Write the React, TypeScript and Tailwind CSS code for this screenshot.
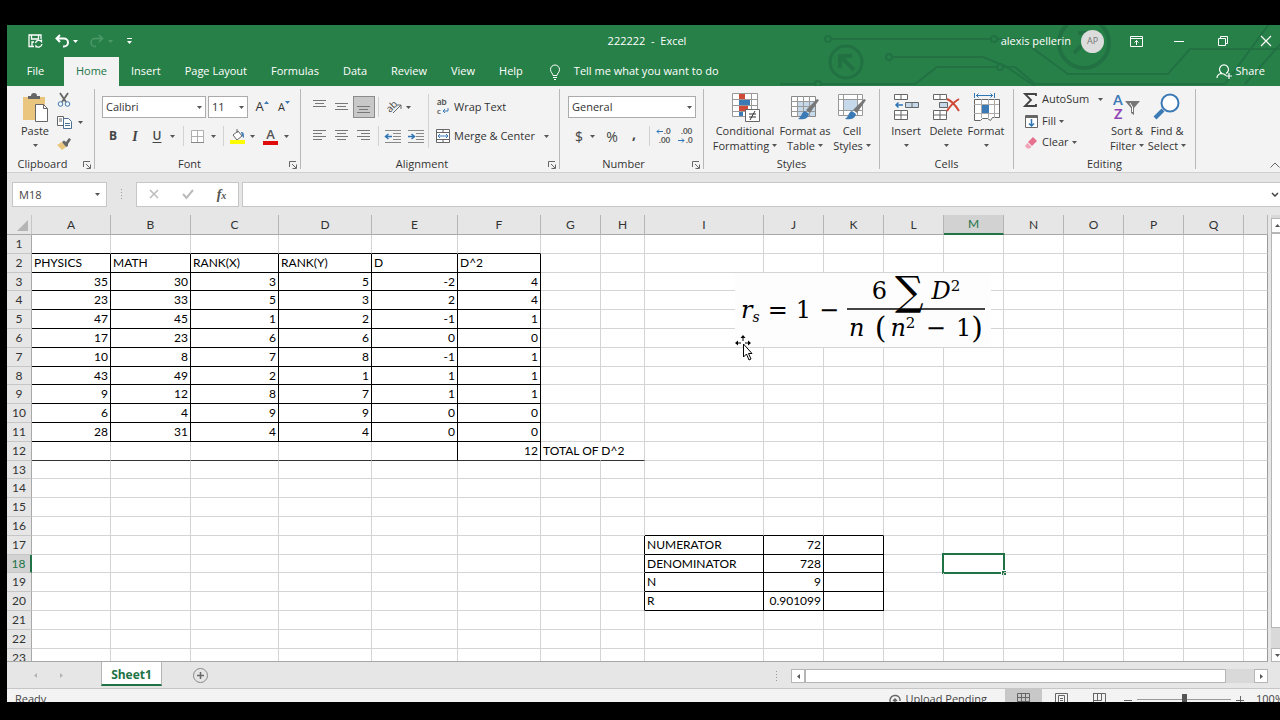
import type { ReactNode } from "react";

const UI_FONT = "font-['Open_Sans','Noto_Sans',sans-serif]";

const columns = [
  { id: "A", width: "w-[79px]" },
  { id: "B", width: "w-[80px]" },
  { id: "C", width: "w-[88px]" },
  { id: "D", width: "w-[93px]" },
  { id: "E", width: "w-[86px]" },
  { id: "F", width: "w-[83px]" },
  { id: "G", width: "w-[60px]" },
  { id: "H", width: "w-[44px]" },
  { id: "I", width: "w-[119px]" },
  { id: "J", width: "w-[60px]" },
  { id: "K", width: "w-[60px]" },
  { id: "L", width: "w-[60px]" },
  { id: "M", width: "w-[60px]" },
  { id: "N", width: "w-[60px]" },
  { id: "O", width: "w-[60px]" },
  { id: "P", width: "w-[60px]" },
  { id: "Q", width: "w-[60px]" },
  { id: "", width: "" },
];

const cells: Record<number, Record<string, string | number>> = {
  2: { A: "PHYSICS", B: "MATH", C: "RANK(X)", D: "RANK(Y)", E: "D", F: "D^2" },
  3: { A: 35, B: 30, C: 3, D: 5, E: -2, F: 4 },
  4: { A: 23, B: 33, C: 5, D: 3, E: 2, F: 4 },
  5: { A: 47, B: 45, C: 1, D: 2, E: -1, F: 1 },
  6: { A: 17, B: 23, C: 6, D: 6, E: 0, F: 0 },
  7: { A: 10, B: 8, C: 7, D: 8, E: -1, F: 1 },
  8: { A: 43, B: 49, C: 2, D: 1, E: 1, F: 1 },
  9: { A: 9, B: 12, C: 8, D: 7, E: 1, F: 1 },
  10: { A: 6, B: 4, C: 9, D: 9, E: 0, F: 0 },
  11: { A: 28, B: 31, C: 4, D: 4, E: 0, F: 0 },
  12: { F: 12, G: "TOTAL OF D^2" },
  17: { I: "NUMERATOR", J: 72 },
  18: { I: "DENOMINATOR", J: 728 },
  19: { I: "N", J: 9 },
  20: { I: "R", J: 0.901099 },
};

const rows = Array.from({ length: 23 }, (_, i) => i + 1);

const rightBorder = (row: number, col: string) => {
  if (row >= 2 && row <= 11 && "ABCDEF".includes(col)) return "border-r-black";
  if (row === 12 && "EF".includes(col)) return "border-r-black";
  if (row === 12 && col === "G") return "border-r-white";
  if (row >= 17 && row <= 20 && "HIJK".includes(col)) return "border-r-black";
  return "border-r-[#d4d4d4]";
};

const bottomBorder = (row: number, col: string) => {
  if (row <= 11 && "ABCDEF".includes(col)) return "border-b-black";
  if (row === 12 && "ABCDEFGH".includes(col)) return "border-b-[#333]";
  if (row >= 16 && row <= 20 && "IJK".includes(col)) return "border-b-black";
  return "border-b-[#d4d4d4]";
};

const Caret = ({ className = "fill-[#555]" }: { className?: string }) => (
  <svg viewBox="0 0 5 3" className={`h-[3px] w-[5px] shrink-0 ${className}`}>
    <path d="M0 0h5L2.5 3z" />
  </svg>
);

const Icon = ({
  w,
  h,
  children,
}: {
  w: number;
  h: number;
  children: ReactNode;
}) => (
  <svg
    width={w}
    height={h}
    viewBox={`0 0 ${w} ${h}`}
    fill="none"
    stroke="#666"
    className="shrink-0 overflow-visible"
  >
    {children}
  </svg>
);

const IconButton = ({
  label,
  className = "w-[22px]",
  children,
}: {
  label: string;
  className?: string;
  children: ReactNode;
}) => (
  <button
    type="button"
    aria-label={label}
    className={`flex h-[22px] shrink-0 items-center justify-center ${className}`}
  >
    {children}
  </button>
);

const Separator = ({ className = "" }: { className?: string }) => (
  <span className={`h-5 w-px shrink-0 bg-[#d2d2d2] ${className}`} />
);

const Group = ({
  title,
  className,
  launcher = false,
  children,
}: {
  title: string;
  className: string;
  launcher?: boolean;
  children: ReactNode;
}) => (
  <section
    aria-label={title}
    className={`flex h-20 shrink-0 flex-col border-r border-[#b8b8b8] ${className}`}
  >
    <div className="flex flex-1">{children}</div>
    <div
      className={`relative h-[14px] text-center leading-[18px] ${launcher ? "pr-4" : ""}`}
    >
      {title}
      {launcher && (
        <button
          type="button"
          aria-label={`${title} settings`}
          className="absolute right-[3px] top-[6px]"
        >
          <Icon w={8} h={8}>
            <path d="M.5 6V.5H7M3 3l4 4M7.500 3.500v4h-4" />
          </Icon>
        </button>
      )}
    </div>
  </section>
);

const BigButton = ({
  lines,
  className,
  caretBelow = false,
  children,
}: {
  lines: string[];
  className: string;
  caretBelow?: boolean;
  children: ReactNode;
}) => (
  <button
    type="button"
    className={`flex shrink-0 flex-col items-center whitespace-nowrap pt-[2px] leading-[15px] ${className}`}
  >
    <span className="flex h-[32px] items-center">{children}</span>
    <span>{lines[0]}</span>
    {caretBelow ? (
      <Caret className="mt-[6px] fill-[#555]" />
    ) : (
      <span className="flex items-center gap-[3px]">
        {lines[1]}
        <Caret />
      </span>
    )}
  </button>
);

const Lines = ({ segments }: { segments: [number, number, number][] }) => (
  <Icon w={14} h={14}>
    {segments.map(([x1, x2, y]) => (
      <path key={y} d={`M${x1} ${y + 0.5}H${x2}`} stroke="#777" />
    ))}
  </Icon>
);

const Brush = () => (
  <>
    <path d="M27 6l2 1-9 13-4-3z" fill="#777" stroke="none" />
    <path d="M15 18l4 3c-1 5-6 6-11 5 4-2 3-7 7-8z" fill="#3c7ab5" stroke="none" />
  </>
);

const TitleBar = () => (
  <div className="relative flex h-8 items-center text-white">
    <div className="flex flex-1 items-center">
      <button type="button" aria-label="Save" className="ml-[21px]">
        <Icon w={15} h={14}>
          <g stroke="#fff" strokeWidth="1.300">
            <path d="M6 12.500H1V1h12v4M3.500 1v4h7V1M4 12V8h2" />
            <path d="M7.500 9a3.500 3.500 0 0 1 6-1.500V5.500M14 10a3.500 3.500 0 0 1-6 2v1.500" />
          </g>
        </Icon>
      </button>
      <button type="button" aria-label="Undo" className="ml-3">
        <Icon w={15} h={14}>
          <path d="M5 1L1.500 4.500 5 8M2 4.500h7a4 4 0 0 1 0 8H8" stroke="#fff" strokeWidth="2" />
        </Icon>
      </button>
      <Caret className="ml-[3px] fill-white" />
      <button type="button" aria-label="Redo" className="ml-[11px]">
        <Icon w={15} h={14}>
          <path d="M10 1l3.500 3.500L10 8M13 4.500H6a4 4 0 0 0 0 8h1" stroke="#4c9a68" strokeWidth="1.500" />
        </Icon>
      </button>
      <Caret className="ml-[4px] fill-[#4c9a68]" />
      <button type="button" aria-label="Customize toolbar" className="ml-[14px]">
        <Icon w={5} h={7}>
          <path d="M0 .5h5" stroke="#fff" />
          <path d="M0 3h5L2.500 6z" fill="#fff" stroke="none" />
        </Icon>
      </button>
    </div>
    <h1 className="whitespace-pre pl-[7px]">222222  -  Excel</h1>
    <div className="flex flex-1 items-center justify-end">
      <span>alexis pellerin</span>
      <span className="ml-[10px] flex size-[23px] items-center justify-center rounded-full bg-[#dcdcdc] text-[9px] text-[#777]">
        AP
      </span>
      <IconButton label="Ribbon display options" className="ml-[11px] w-[42px]">
        <Icon w={13} h={11}>
          <path d="M.5.500h12v10H.5zM.5 2.500h12M6.500 9V4.500M4.500 6.500l2-2 2 2" stroke="#fff" />
        </Icon>
      </IconButton>
      <IconButton label="Minimize" className="w-[44px]">
        <Icon w={10} h={11}>
          <path d="M0 5.500h10" stroke="#fff" />
        </Icon>
      </IconButton>
      <IconButton label="Restore" className="w-[43px]">
        <Icon w={10} h={10}>
          <path d="M.5 2.500h7v7h-7zM2.500 2.500v-2h7v7h-2" stroke="#fff" />
        </Icon>
      </IconButton>
      <IconButton label="Close" className="w-[36px] pl-2">
        <Icon w={10} h={10}>
          <path d="M0 0l10 10M10 0L0 10" stroke="#fff" strokeWidth="1.200" />
        </Icon>
      </IconButton>
    </div>
  </div>
);

const Tabs = () => (
  <nav className="relative flex h-[29px] items-stretch text-white">
    <button type="button" className="w-[57px]">
      File
    </button>
    <button type="button" className="w-[55px] bg-[#f3f3f3] text-[#217346]">
      Home
    </button>
    {["Insert", "Page Layout", "Formulas", "Data", "Review", "View", "Help"].map(
      (tab) => (
        <button key={tab} type="button" className="px-3">
          {tab}
        </button>
      ),
    )}
    <button type="button" className="flex items-center gap-[13px] pl-[14px]">
      <Icon w={12} h={16}>
        <path
          d="M4 11.500c0-2-2.500-3-2.500-6a4.500 4.500 0 0 1 9 0c0 3-2.500 4-2.500 6zM4 13.500h4M5 15.500h2"
          stroke="#fff"
        />
      </Icon>
      Tell me what you want to do
    </button>
    <button type="button" className="ml-auto flex items-center gap-[3px] pr-[15px]">
      <Icon w={16} h={15}>
        <path
          d="M1 14c0-3 2-4 4-4.500M6 9.500a4.500 4.500 0 1 1 4 0M10 12h6M13 9v6M5 9.500c2 0 4 1 5 2"
          stroke="#fff"
          strokeWidth="1.200"
        />
      </Icon>
      Share
    </button>
  </nav>
);

const Header = () => (
  <header className="relative shrink-0 overflow-hidden bg-[#278048]">
    <svg
      viewBox="0 0 500 61"
      className="absolute right-0 top-0 h-[61px] w-[500px]"
      fill="none"
      stroke="#217143"
      strokeWidth="2"
    >
      <circle cx="48" cy="14" r="3" />
      <path d="M51 14h160M218 14h22l48 35h100l22-25h90" />
      <circle cx="214" cy="14" r="3" />
      <circle cx="109" cy="32" r="3" />
      <path d="M112 32h91l22 9 30 20M0 59h35M41 59h94l22-17h60M223 42h12l20 17h190l55-75M465 59l40-45" />
      <circle cx="38" cy="59" r="3" />
      <circle cx="220" cy="42" r="3" />
      <circle cx="66" cy="37" r="16" strokeWidth="3" />
      <path d="M74 45L60 31M60 43V31h12" strokeWidth="4" />
      <circle cx="304" cy="18" r="25" strokeWidth="4" />
      <path d="M294 28l18-18M298 8h14v14" strokeWidth="4" />
    </svg>
    <TitleBar />
    <Tabs />
  </header>
);

const ClipboardGroup = () => (
  <Group title="Clipboard" className="w-[88px]" launcher>
    <BigButton lines={["Paste"]} caretBelow className="ml-3 w-[32px]">
      <Icon w={27} h={29}>
        <path d="M1 4h22v23H1z" fill="#e9c57d" stroke="none" />
        <path d="M6 6V3h3a3 3 0 0 1 6 0h3v3z" fill="#666" stroke="none" />
        <path d="M13.500 11.500h8l4 4v13h-12z" fill="#fff" />
        <path d="M21.500 11.500v4h4" />
      </Icon>
    </BigButton>
    <div className="ml-[2px] flex flex-col">
      <IconButton label="Cut">
        <Icon w={14} h={14}>
          <path d="M3 0l6 9M11 0L5 9" strokeWidth="1.800" />
          <circle cx="3.500" cy="11" r="2.300" stroke="#3c7ab5" />
          <circle cx="10.500" cy="11" r="2.300" stroke="#3c7ab5" />
        </Icon>
      </IconButton>
      <div className="flex items-center gap-[3px]">
        <IconButton label="Copy">
          <Icon w={15} h={13}>
            <path d="M.5.500h6v9h-6zM2 3h3M2 5h3" fill="#fff" />
            <path d="M6.500 2.500h5l3 3v7h-8zM8 7.500h5M8 9.500h5" fill="#fff" stroke="#4a6f94" />
          </Icon>
        </IconButton>
        <Caret />
      </div>
      <IconButton label="Format painter">
        <Icon w={14} h={12}>
          <path d="M0 7l5-3 4 5-4 3z" fill="#e9c57d" stroke="none" />
          <path d="M5 4l2-1.500 2 1.500 3-4 2 1.500L11 6v2L9 9z" fill="#666" stroke="none" />
        </Icon>
      </IconButton>
    </div>
  </Group>
);

const selectStyle =
  "h-[22px] w-full appearance-none border border-[#ababab] bg-white pl-[3px] text-[#333] outline-none";

const Combo = ({
  label,
  value,
  className,
}: {
  label: string;
  value: string;
  className: string;
}) => (
  <label className={`relative block shrink-0 ${className}`}>
    <select aria-label={label} defaultValue={value} className={selectStyle}>
      <option>{value}</option>
    </select>
    <Caret className="pointer-events-none absolute right-[4px] top-[10px] fill-[#555]" />
  </label>
);

const FontGroup = () => (
  <Group title="Font" className="w-[206px]" launcher>
    <div className="flex flex-col gap-[7px] pl-[7px] pt-[7px]">
      <div className="flex items-center">
        <Combo label="Font name" value="Calibri" className="w-[104px]" />
        <Combo label="Font size" value="11" className="ml-[2px] w-[40px]" />
        <IconButton label="Increase font size" className="ml-[3px] w-[22px]">
          <span className="text-[13px]">A</span>
          <Caret className="mb-[10px] rotate-180 fill-[#3c7ab5]" />
        </IconButton>
        <IconButton label="Decrease font size">
          <span className="text-[11px]">A</span>
          <Caret className="mb-[10px] fill-[#3c7ab5]" />
        </IconButton>
      </div>
      <div className="flex items-center text-[12px] text-[#444]">
        <IconButton label="Bold">
          <b>B</b>
        </IconButton>
        <IconButton label="Italic">
          <i className="font-['Liberation_Serif',serif] text-[14px] font-bold">I</i>
        </IconButton>
        <IconButton label="Underline">
          <span className="font-semibold underline underline-offset-2">U</span>
        </IconButton>
        <Caret className="ml-[2px] fill-[#555]" />
        <Separator className="ml-2" />
        <IconButton label="Borders" className="ml-px w-[24px]">
          <Icon w={13} h={13}>
            <path d="M.5.500h12v12H.5zM6.500 0v13M0 6.500h13" fill="#fff" stroke="#b0b0b0" />
            <path d="M0 12.500h13" stroke="#888" />
          </Icon>
        </IconButton>
        <Caret className="ml-[2px] fill-[#555]" />
        <Separator className="ml-[7px]" />
        <IconButton label="Fill color" className="ml-[2px] w-[24px]">
          <Icon w={16} h={15}>
            <path d="M3 6l5-4 4 5-5 4z" fill="#fff" />
            <path d="M7 4V0" />
            <path d="M11 3c3 0 3 2 3 6-2-1-2-3-3-6z" fill="#3c7ab5" stroke="none" />
            <path d="M0 11h15v4H0z" fill="#ff0" stroke="none" />
          </Icon>
        </IconButton>
        <Caret />
        <button
          type="button"
          aria-label="Font color"
          className="ml-2 h-[17px] w-[15px] border-b-4 border-[#e00b0b] text-center text-[13px] font-semibold leading-[13px] text-[#555]"
        >
          A
        </button>
        <Caret className="ml-[6px] fill-[#555]" />
      </div>
    </div>
  </Group>
);

const Indent = ({ right = false }: { right?: boolean }) => (
  <Icon w={16} h={13}>
    <path d="M0 .5h16M8 3.500h8M8 6.500h8M8 9.500h8M0 12.500h16" stroke="#888" />
    {right ? (
      <path d="M0 6.500h6M3.500 4l3 2.500-3 2.500" stroke="#2f74b5" strokeWidth="1.500" />
    ) : (
      <path d="M7 6.500H1M3.500 4L.5 6.500l3 2.500" stroke="#2f74b5" strokeWidth="1.500" />
    )}
  </Icon>
);

const AlignmentGroup = () => (
  <Group title="Alignment" className="w-[259px]" launcher>
    <div className="flex flex-col gap-[7px] pl-2 pt-[7px]">
      <div className="flex items-center">
        <IconButton label="Top align">
          <Lines segments={[[0, 13, 0], [2, 11, 3], [0, 13, 6]]} />
        </IconButton>
        <IconButton label="Middle align">
          <Lines segments={[[0, 13, 3], [2, 11, 6], [0, 13, 9]]} />
        </IconButton>
        <IconButton label="Bottom align" className="w-[22px] border border-[#8c8c8c] bg-[#c8c8c8]">
          <Lines segments={[[0, 13, 6], [2, 11, 9], [0, 13, 12]]} />
        </IconButton>
        <Separator className="ml-[3px]" />
        <IconButton label="Orientation" className="ml-[5px] w-[22px]">
          <Icon w={16} h={14}>
            <text
              x="0"
              y="10"
              fontSize="10"
              fill="#444"
              stroke="none"
              transform="rotate(-45 5 8)"
            >
              ab
            </text>
            <path d="M6 13l8-8M10 5h4v4" />
          </Icon>
        </IconButton>
        <Caret />
      </div>
      <div className="flex items-center">
        <IconButton label="Align left">
          <Lines segments={[[0, 13, 1], [0, 9, 4], [0, 13, 7], [0, 9, 10]]} />
        </IconButton>
        <IconButton label="Center">
          <Lines segments={[[0, 13, 1], [2, 11, 4], [0, 13, 7], [2, 11, 10]]} />
        </IconButton>
        <IconButton label="Align right">
          <Lines segments={[[0, 13, 1], [4, 13, 4], [0, 13, 7], [4, 13, 10]]} />
        </IconButton>
        <Separator className="ml-[3px]" />
        <IconButton label="Decrease indent" className="ml-[2px] w-[23px]">
          <Indent />
        </IconButton>
        <IconButton label="Increase indent" className="w-[23px]">
          <Indent right />
        </IconButton>
      </div>
    </div>
    <span className="ml-px mt-[5px] h-[54px] w-px bg-[#d2d2d2]" />
    <div className="flex flex-col gap-[7px] pl-[7px] pt-[7px]">
      <button type="button" className="flex h-[22px] items-center gap-1">
        <svg
          viewBox="0 0 14 16"
          className="h-4 w-[14px] shrink-0 fill-none font-['Lato',sans-serif]"
        >
          <text x="1" y="6" fontSize="9" fontWeight="700" fill="#555">
            ab
          </text>
          <text x="1" y="15" fontSize="8" fontWeight="700" fill="#555">
            c
          </text>
          <path d="M12 9v3H7M9 10l-2 2 2 2" stroke="#3c7ab5" />
        </svg>
        Wrap Text
      </button>
      <button type="button" className="flex h-[22px] items-center gap-1 whitespace-nowrap">
        <Icon w={14} h={14}>
          <path d="M.5.500h13v13H.5zM0 3.500h14M0 10.500h14M7 0v3.500M7 10.500V14" fill="#fff" />
          <path d="M2 7h10M4 5L2 7l2 2M10 5l2 2-2 2" stroke="#3c7ab5" />
        </Icon>
        Merge &amp; Center
        <Caret className="ml-[5px] fill-[#555]" />
      </button>
    </div>
  </Group>
);

const Decimal = ({ increase = false }: { increase?: boolean }) => (
  <svg
    viewBox="0 0 15 16"
    className="h-4 w-[15px] shrink-0 fill-none font-['Lato',sans-serif]"
  >
    <g fontSize="8" fontWeight="700" fill="#555">
      <text x={increase ? 8 : 3} y="6">
        {increase ? ".0" : ".00"}
      </text>
      <text x={increase ? 3 : 8} y="15">
        {increase ? ".00" : ".0"}
      </text>
    </g>
    {increase ? (
      <path d="M7 3.500H1M3 1.500l-2 2 2 2" stroke="#2f74b5" />
    ) : (
      <path d="M0 12.500h6M4 10.500l2 2-2 2" stroke="#2f74b5" />
    )}
  </svg>
);

const NumberGroup = () => (
  <Group title="Number" className="w-[144px]" launcher>
    <div className="flex flex-col gap-[7px] pl-2 pt-[7px]">
      <Combo label="Number format" value="General" className="w-[128px]" />
      <div className="flex items-center text-[14px] text-[#444]">
        <IconButton label="Accounting format">$</IconButton>
        <Caret />
        <IconButton label="Percent style" className="ml-[6px] w-[22px]">
          %
        </IconButton>
        <IconButton label="Comma style">
          <b className="pb-[6px]">,</b>
        </IconButton>
        <Separator className="ml-1" />
        <IconButton label="Increase decimal" className="ml-[2px] w-[22px]">
          <Decimal increase />
        </IconButton>
        <IconButton label="Decrease decimal">
          <Decimal />
        </IconButton>
      </div>
    </div>
  </Group>
);

const StylesGroup = () => (
  <Group title="Styles" className="w-[176px]">
    <BigButton lines={["Conditional", "Formatting"]} className="ml-[7px] w-[68px]">
      <Icon w={30} h={29}>
        <path d="M2.500.500h25v23h-25zM2 6.500h26M2 12.500h26M2 18.500h26M9.500 0v24M21.500 0v24" fill="#fff" stroke="#999" />
        <path d="M9 1h6v5H9zM9 13h9v5H9z" fill="#cf4b37" stroke="none" />
        <path d="M9 7h11v5H9zM9 19h4v4H9z" fill="#3c7ab5" stroke="none" />
        <path d="M15.500 16.500h14v12h-14z" fill="#fff" />
        <path d="M19 21h7M19 24h7M25 18l-5 9" stroke="#333" />
      </Icon>
    </BigButton>
    <BigButton lines={["Format as", "Table"]} className="w-[52px]">
      <Icon w={30} h={29}>
        <path d="M1.500 3.500h24v20h-24z" fill="#fff" stroke="#888" />
        <path d="M8 9h17v14H8z" fill="#c5d9ea" stroke="none" />
        <path d="M1 8.500h24M1 13.500h24M1 18.500h24M7.500 3v21M13.500 3v21M19.500 3v21" stroke="#999" />
        <Brush />
      </Icon>
    </BigButton>
    <BigButton lines={["Cell", "Styles"]} className="w-[42px]">
      <Icon w={30} h={29}>
        <path d="M1.500 1.500h24v21h-24zM1 6.500h24M1 17.500h24M6.500 1v22M20.500 1v22" fill="#fff" stroke="#999" />
        <path d="M7 7h13v10H7z" fill="#c5d9ea" stroke="none" />
        <Brush />
      </Icon>
    </BigButton>
  </Group>
);

const CellsGroup = () => (
  <Group title="Cells" className="w-[134px]">
    <BigButton lines={["Insert"]} caretBelow className="ml-[6px] w-[40px]">
      <Icon w={26} h={28}>
        <path d="M1.500 1.500h13v5h-13zM8 1v6M1.500 17.500h13v9h-13zM8 17v10M1 22h14" fill="#fff" />
        <path d="M12.500 9.500h13v5h-13zM19 9v6" fill="#c5d9ea" />
        <path d="M10 12H3M5.500 9.500L3 12l2.500 2.500" stroke="#2f74b5" strokeWidth="1.500" />
      </Icon>
    </BigButton>
    <BigButton lines={["Delete"]} caretBelow className="w-[40px]">
      <Icon w={28} h={28}>
        <path d="M1.500 1.500h13v5h-13zM8 1v6M1.500 17.500h13v9h-13zM8 17v10M1 22h14" fill="#fff" />
        <path d="M7.500 9.500h8v5h-8z" fill="#c5d9ea" />
        <path d="M15 6c5 2 9 7 12 12M27 6c-5 3-9 7-12 12" stroke="#cf4b37" strokeWidth="2" />
      </Icon>
    </BigButton>
    <BigButton lines={["Format"]} caretBelow className="w-[40px]">
      <Icon w={27} h={29}>
        <path d="M1.500 0v5M21.500 0v5M3 2.500h17M5.500.500l-2 2 2 2M17.500.500l2 2-2 2" stroke="#2f74b5" />
        <path d="M1.500 6.500h25v18h-7l-2 3-3-2h-5l-2 2h-6z" fill="#fff" />
        <path d="M1 11.500h25M1 20.500h25M8.500 6v19M15.500 6v19M21.500 6v19" stroke="#aaa" />
        <path d="M9 12h7v8H9z" fill="#3c7ab5" stroke="none" />
      </Icon>
    </BigButton>
  </Group>
);

const EditingGroup = () => (
  <Group title="Editing" className="w-[182px]">
    <div className="ml-[10px] flex w-[83px] flex-col">
      <button type="button" className="flex h-[21px] items-center">
        <span className="flex w-[18px]">
          <Icon w={13} h={14}>
            <path d="M12 3V1H1l6 6-6 6h11v-2" stroke="#444" strokeWidth="1.800" />
          </Icon>
        </span>
        AutoSum
        <Caret className="ml-auto mr-1 fill-[#555]" />
      </button>
      <button type="button" className="flex h-[22px] items-center">
        <span className="flex w-[18px] pl-px">
          <Icon w={13} h={13}>
            <path d="M.5.500h12v12H.5z" fill="#fff" />
            <path d="M0 2h13" strokeWidth="2" />
            <path d="M6.500 4v7M4 8.500l2.500 2.500L9 8.500" stroke="#2f74b5" strokeWidth="1.500" />
          </Icon>
        </span>
        Fill
        <Caret className="ml-[3px] fill-[#555]" />
      </button>
      <button type="button" className="flex h-[21px] items-center">
        <span className="flex w-[18px] pl-px">
          <Icon w={13} h={12}>
            <path d="M3 5l5-5 4 4-5 5z" fill="#e8708f" stroke="none" />
            <path d="M2.500 6l4 4-2 1.500H2L0 9z" fill="#f0a3b6" stroke="none" />
          </Icon>
        </span>
        Clear
        <Caret className="ml-[3px] fill-[#555]" />
      </button>
    </div>
    <BigButton lines={["Sort &", "Filter"]} className="w-[40px]">
      <svg
        viewBox="0 0 28 28"
        className="size-7 shrink-0 font-['Lato',sans-serif]"
        fill="none"
      >
        <text x="0" y="12" fontSize="14" fontWeight="700" fill="#3c7ab5">
          A
        </text>
        <text x="1" y="26" fontSize="14" fontWeight="700" fill="#9044b5">
          Z
        </text>
        <path d="M12 8h15l-6 7v7l-3-2v-5z" fill="#777" />
        <path d="M17 10l2.500 4v5" stroke="#fff" />
      </svg>
    </BigButton>
    <BigButton lines={["Find &", "Select"]} className="w-[40px]">
      <Icon w={26} h={28}>
        <path d="M9 17l-8 8" stroke="#3c7ab5" strokeWidth="4" />
        <circle cx="16" cy="10" r="8.500" fill="#fff" stroke="#3c7ab5" strokeWidth="2" />
      </Icon>
    </BigButton>
  </Group>
);

const Ribbon = () => (
  <div className="flex h-[87px] shrink-0 border-b border-[#d0d0d0] bg-[#f3f3f3] pt-[3px] text-[#333]">
    <ClipboardGroup />
    <FontGroup />
    <AlignmentGroup />
    <NumberGroup />
    <StylesGroup />
    <CellsGroup />
    <EditingGroup />
    <button type="button" aria-label="Collapse ribbon" className="mb-1 ml-auto mt-auto">
      <Icon w={10} h={6}>
        <path d="M.5 5.500L5 1l4.500 4.500" />
      </Icon>
    </button>
  </div>
);

const FormulaBar = () => (
  <div className="flex h-[42px] shrink-0 items-center bg-[#e6e6e6] pl-[5px]">
    <label className="relative block w-[95px]">
      <input
        aria-label="Name box"
        defaultValue="M18"
        className="h-[25px] w-full border border-[#c6c6c6] bg-white pl-[6px] text-[#444] outline-none"
      />
      <Caret className="absolute right-[7px] top-[11px] fill-[#555]" />
    </label>
    <Icon w={29} h={12}>
      <path d="M14.500 1v10" stroke="#999" strokeDasharray="1 2" />
    </Icon>
    <div className="flex h-[25px] w-[103px] items-center border border-[#c6c6c6] bg-white">
      <IconButton label="Cancel" className="w-[34px]">
        <Icon w={10} h={10}>
          <path d="M1 1l8 8M9 1L1 9" stroke="#bbb" strokeWidth="1.500" />
        </Icon>
      </IconButton>
      <IconButton label="Enter" className="w-[34px]">
        <Icon w={12} h={10}>
          <path d="M1 5l3.500 4L11 1" stroke="#bbb" strokeWidth="2" />
        </Icon>
      </IconButton>
      <IconButton label="Insert function" className="w-[33px]">
        <i className="font-['Liberation_Serif',serif] text-[14px] font-bold text-[#555]">
          f<span className="text-[10px]">x</span>
        </i>
      </IconButton>
    </div>
    <label className="relative ml-[3px] block flex-1">
      <input
        aria-label="Formula bar"
        className="h-[25px] w-full border border-r-0 border-[#c6c6c6] bg-white px-2 outline-none"
      />
      <svg
        viewBox="0 0 8 5"
        className="absolute right-[1px] top-[10px] h-[5px] w-2 fill-none stroke-[#444]"
        strokeWidth="1.500"
      >
        <path d="M1 1l3 3 3-3" />
      </svg>
    </label>
  </div>
);

const Grid = () => (
  <table className="w-full table-fixed border-separate border-spacing-0 bg-white">
    <colgroup>
      <col className="w-[25px]" />
      {columns.map((col) => (
        <col key={col.id} className={col.width} />
      ))}
    </colgroup>
    <thead>
      <tr className="h-5">
        <th className="border-b border-r border-[#a8a8a8] border-r-[#c6c6c6] bg-[#e6e6e6] p-0">
          <svg viewBox="0 0 12 12" className="ml-auto mr-[3px] size-3 fill-[#b5b5b5]">
            <path d="M12 1v11H1z" />
          </svg>
        </th>
        {columns.map((col) => (
          <th
            key={col.id}
            scope="col"
            className={`p-0 text-[12px] font-normal leading-4 ${
              col.id === "M"
                ? "border-b-2 border-r border-b-[#217346] border-r-[#b5b5b5] bg-[#d2d2d2] text-[#217346]"
                : "border-b border-r border-b-[#a8a8a8] border-r-[#b5b5b5] bg-[#e6e6e6] text-[#333]"
            }`}
          >
            {col.id}
          </th>
        ))}
      </tr>
    </thead>
    <tbody>
      {rows.map((row) => (
        <tr key={row} className={row % 5 === 3 ? "h-[18px]" : "h-[19px]"}>
          <th
            scope="row"
            className={`border-b border-b-[#c6c6c6] p-0 text-[12px] font-normal leading-4 ${
              row === 18
                ? "border-r-2 border-r-[#217346] bg-[#d2d2d2] text-[#217346]"
                : "border-r border-r-[#a8a8a8] bg-[#e6e6e6] text-[#333]"
            }`}
          >
            {row}
          </th>
          {columns.map((col) => {
            const value = cells[row]?.[col.id];
            return (
              <td
                key={col.id}
                className={`relative whitespace-nowrap border-b border-r px-[2px] py-0 leading-4 ${
                  typeof value === "number" ? "text-right" : "text-left"
                } ${col.id ? rightBorder(row, col.id) : "border-r-[#999]"} ${
                  col.id ? bottomBorder(row, col.id) : "border-b-[#d4d4d4]"
                }`}
              >
                {value}
                {row === 18 && col.id === "M" && (
                  <span className="absolute -bottom-[2px] -left-[2px] -right-[2px] -top-[2px] border-2 border-[#217346]">
                    <span className="absolute -bottom-[3px] -right-[3px] size-[5px] border-l border-t border-white bg-[#217346]" />
                  </span>
                )}
              </td>
            );
          })}
        </tr>
      ))}
    </tbody>
  </table>
);

const Squared = ({ children }: { children: ReactNode }) => (
  <span className="flex items-start">
    <i>{children}</i>
    <sup className="top-0 text-[15px] leading-none">2</sup>
  </span>
);

const SpearmanFormula = () => (
  <div className="absolute left-[728px] top-[58px] flex h-[74px] w-[256px] items-center justify-between bg-[#fdfdfd] px-[6px] font-['DejaVu_Serif',serif] text-[24px] leading-none text-black">
    <span>
      <i>r</i>
      <sub className="text-[14px] italic">s</sub>
    </span>
    <span>=</span>
    <span>1</span>
    <span>−</span>
    <span className="flex w-[138px] flex-col">
      <span className="flex h-[36px] items-center justify-center gap-2 border-b-2 border-[#444]">
        <span>6</span>
        <span className="text-[40px]">∑</span>
        <Squared>D</Squared>
      </span>
      <span className="flex h-[36px] items-center justify-between px-[2px]">
        <i>n</i>
        <span className="flex items-center gap-1">
          <span className="text-[30px]">(</span>
          <Squared>n</Squared>
        </span>
        <span>−</span>
        <span className="flex items-center">
          <span>1</span>
          <span className="text-[30px]">)</span>
        </span>
      </span>
    </span>
  </div>
);

const MoveCursor = () => (
  <svg
    viewBox="0 0 18 26"
    className="absolute left-[728px] top-[120px] h-[26px] w-[18px]"
    fill="#000"
  >
    <path d="M8 0l2.500 3H8.500v3h-1V3h-2zM0 8l3-2.500v2h3v1H3v2zM16 8l-3-2.500v2h-3v1h3v2z" />
    <path d="M8.500 9v13l3-3 2.500 6 2-1-2.500-5.500H17z" fill="#fff" stroke="#000" />
  </svg>
);

const VerticalScroll = () => (
  <div className="flex w-[9px] shrink-0 flex-col overflow-hidden bg-[#d9d9d9] pt-[3px]">
    <button type="button" aria-label="Scroll up" className="flex h-[15px] w-[14px] items-center border border-[#b5b5b5] bg-white pl-[3px]">
      <Caret className="rotate-180 fill-[#555]" />
    </button>
    <span className="w-[14px] flex-1 border border-[#b5b5b5] bg-white" />
    <button type="button" aria-label="Scroll down" className="mt-5 flex h-[14px] w-[14px] items-center border border-[#b5b5b5] bg-white pl-[3px]">
      <Caret />
    </button>
  </div>
);

const Sheet = () => (
  <main className="flex min-h-0 flex-1 bg-[#e6e6e6]">
    <div className="relative mr-[3px] min-w-0 flex-1 overflow-hidden border-b border-[#a8a8a8] font-['Lato',sans-serif] text-[12px] text-black">
      <Grid />
      <SpearmanFormula />
      <MoveCursor />
    </div>
    <VerticalScroll />
  </main>
);

const scrollButton =
  "flex h-[14px] w-[14px] items-center justify-center border border-[#b5b5b5] bg-white";

const SheetTabs = () => (
  <div className="flex h-[27px] shrink-0 items-start border-b border-[#c6c6c6] bg-[#e6e6e6]">
    <button type="button" aria-label="Previous sheet" className="ml-[26px] mt-3 flex">
      <Caret className="rotate-90 fill-[#b5b5b5]" />
    </button>
    <button type="button" aria-label="Next sheet" className="ml-[21px] mt-3 flex">
      <Caret className="-rotate-90 fill-[#b5b5b5]" />
    </button>
    <button
      type="button"
      className="ml-[37px] h-6 w-[61px] border-x border-b-2 border-x-[#b5b5b5] border-b-[#217346] bg-white pt-[3px] text-[12px] font-bold text-[#217346]"
    >
      Sheet1
    </button>
    <button type="button" aria-label="New sheet" className="ml-[31px] mt-[6px]">
      <Icon w={15} h={15}>
        <circle cx="7.500" cy="7.500" r="7" stroke="#888" />
        <path d="M7.500 4v7M4 7.500h7" strokeWidth="1.500" />
      </Icon>
    </button>
    <div className="ml-auto mr-3 flex items-center pt-[7px]">
      <Icon w={16} h={12}>
        <path d="M1.500 1v10" stroke="#999" strokeDasharray="1 2" />
      </Icon>
      <button type="button" aria-label="Scroll left" className={scrollButton}>
        <Caret className="rotate-90 fill-[#555]" />
      </button>
      <span className="h-[14px] w-[421px] border border-[#b5b5b5] bg-white" />
      <span className="h-[14px] w-[28px] bg-[#d9d9d9]" />
      <button type="button" aria-label="Scroll right" className={scrollButton}>
        <Caret className="-rotate-90 fill-[#555]" />
      </button>
    </div>
  </div>
);

const StatusBar = () => (
  <footer className="h-[13px] shrink-0 overflow-hidden bg-[#f3f3f3] text-[#444]">
    <div className="flex h-[21px] items-center">
      <span className="pl-2">Ready</span>
      <span className="ml-auto flex items-center gap-1">
        <Icon w={12} h={12}>
          <path d="M4 11a5 5 0 1 1 7-4M6 9V5M4 7l2-2 2 2" strokeWidth="1.500" />
          <path d="M8 8l3 3M11 8l-3 3" />
        </Icon>
        Upload Pending
      </span>
      <button type="button" aria-label="Normal view" className="ml-[18px] flex h-full w-[37px] items-center justify-center bg-[#c8c8c8]">
        <Icon w={13} h={14}>
          <path d="M.5.500h12v13H.5zM0 4.500h13M0 8.500h13M4.500 0v14M8.500 0v14" />
        </Icon>
      </button>
      <IconButton label="Page layout view" className="w-[38px]">
        <Icon w={13} h={14}>
          <path d="M.5.500h12v13H.5zM3.500 2.500h6v9h-6zM5 5.500h3M5 7.500h3" />
        </Icon>
      </IconButton>
      <IconButton label="Page break view" className="w-[38px]">
        <Icon w={13} h={14}>
          <path d="M.5 0v13.500h12V.500H.5M4.500 0v7.500M8.500 0v7.500H0" />
        </Icon>
      </IconButton>
      <button type="button" aria-label="Zoom out" className="ml-[6px] flex">
        <Icon w={8} h={8}>
          <path d="M0 4.500h8" />
        </Icon>
      </button>
      <input
        type="range"
        aria-label="Zoom"
        defaultValue={50}
        className="mx-[5px] h-3 w-[94px] appearance-none bg-[linear-gradient(#999,#999)] bg-[length:100%_1px] bg-center bg-no-repeat [&::-webkit-slider-thumb]:h-3 [&::-webkit-slider-thumb]:w-[5px] [&::-webkit-slider-thumb]:appearance-none [&::-webkit-slider-thumb]:bg-[#555]"
      />
      <button type="button" aria-label="Zoom in" className="flex">
        <Icon w={8} h={8}>
          <path d="M0 4.500h8M4.500 0v8" />
        </Icon>
      </button>
      <span className="-mr-1 ml-3">100%</span>
    </div>
  </footer>
);

const App = () => {
  return (
    <div
      className={`flex h-screen w-full flex-col overflow-hidden bg-black pb-[18px] pl-[7px] pt-[25px] text-[11px] ${UI_FONT}`}
    >
      <Header />
      <Ribbon />
      <FormulaBar />
      <Sheet />
      <SheetTabs />
      <StatusBar />
    </div>
  );
};

export default App;
